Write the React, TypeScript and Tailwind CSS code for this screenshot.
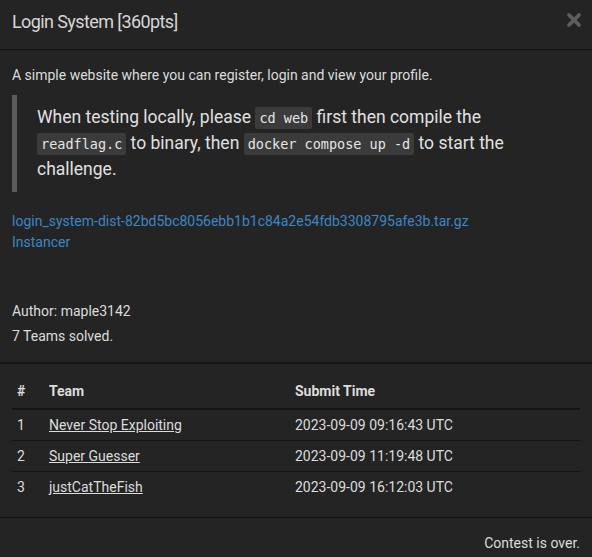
import { X } from "lucide-react";

const solves = [
  { rank: 1, team: "Never Stop Exploiting", time: "2023-09-09 09:16:43 UTC" },
  { rank: 2, team: "Super Guesser", time: "2023-09-09 11:19:48 UTC" },
  { rank: 3, team: "justCatTheFish", time: "2023-09-09 16:12:03 UTC" },
];

function Code({ children }: { children: string }) {
  return (
    <code className="rounded-[2px] bg-[#3b3b3b] px-1 py-[3px] font-['DejaVu_Sans_Mono',monospace] text-[13.5px] text-[#e6e6e6]">
      {children}
    </code>
  );
}

export default function App() {
  return (
    <div className="h-[557px] w-[592px] overflow-hidden bg-[#242424] font-['Roboto',sans-serif] text-[14px] leading-[20px] text-[#dcdcdc]">
      <div className="flex h-[50px] items-center justify-between border-b border-[#121212] px-3">
        <h4 className="pb-[5px] text-[18px] tracking-[-0.6px] text-[#d6d6d6]">Login System [360pts]</h4>
        <X className="mr-[-4px] mt-[-10px] h-5 w-5 text-[#5e5e5e]" strokeWidth={4.5} />
      </div>

      <div className="px-3 pt-[15px]">
        <p className="mb-[10px]">A simple website where you can register, login and view your profile.</p>
        <blockquote className="mb-[19px] border-l-[5px] border-[#5c5c5c] px-5 py-[10px] text-[17.5px] leading-[25px] text-[#e0e0e0]">
          When testing locally, please <Code>cd web</Code> first then compile the <Code>readflag.c</Code> to
          binary, then <Code>docker compose up -d</Code> to start the challenge.
        </blockquote>
        <div className="flex flex-col leading-[21px] text-[#3a87c8]">
          <a href="#">login_system-dist-82bd5bc8056ebb1b1c84a2e54fdb3308795afe3b.tar.gz</a>
          <a href="#">Instancer</a>
        </div>
        <div className="mt-[48px] flex flex-col gap-[5px] pb-4">
          <p>Author: maple3142</p>
          <p>7 Teams solved.</p>
        </div>
      </div>

      <div className="border-t-2 border-[#141414] px-3 pt-[10px] pb-[15px]">
        <table className="w-full border-collapse text-left">
          <thead>
            <tr className="border-b-2 border-[#141414]">
              <th className="w-[37px] py-[7px] pl-[5px] font-bold">#</th>
              <th className="w-[246px] py-[7px] font-bold">Team</th>
              <th className="py-[7px] font-bold">Submit Time</th>
            </tr>
          </thead>
          <tbody>
            {solves.map((s, i) => (
              <tr key={s.rank} className={i < solves.length - 1 ? "border-b border-[#141414]" : ""}>
                <td className="py-[5px] pl-[5px]">{s.rank}</td>
                <td className="py-[5px]">
                  <a href="#" className="underline">
                    {s.team}
                  </a>
                </td>
                <td className="py-[5px]">{s.time}</td>
              </tr>
            ))}
          </tbody>
        </table>
      </div>

      <div className="flex justify-end border-t border-[#141414] px-3 py-[15px]">
        Contest is over.
      </div>
    </div>
  );
}
